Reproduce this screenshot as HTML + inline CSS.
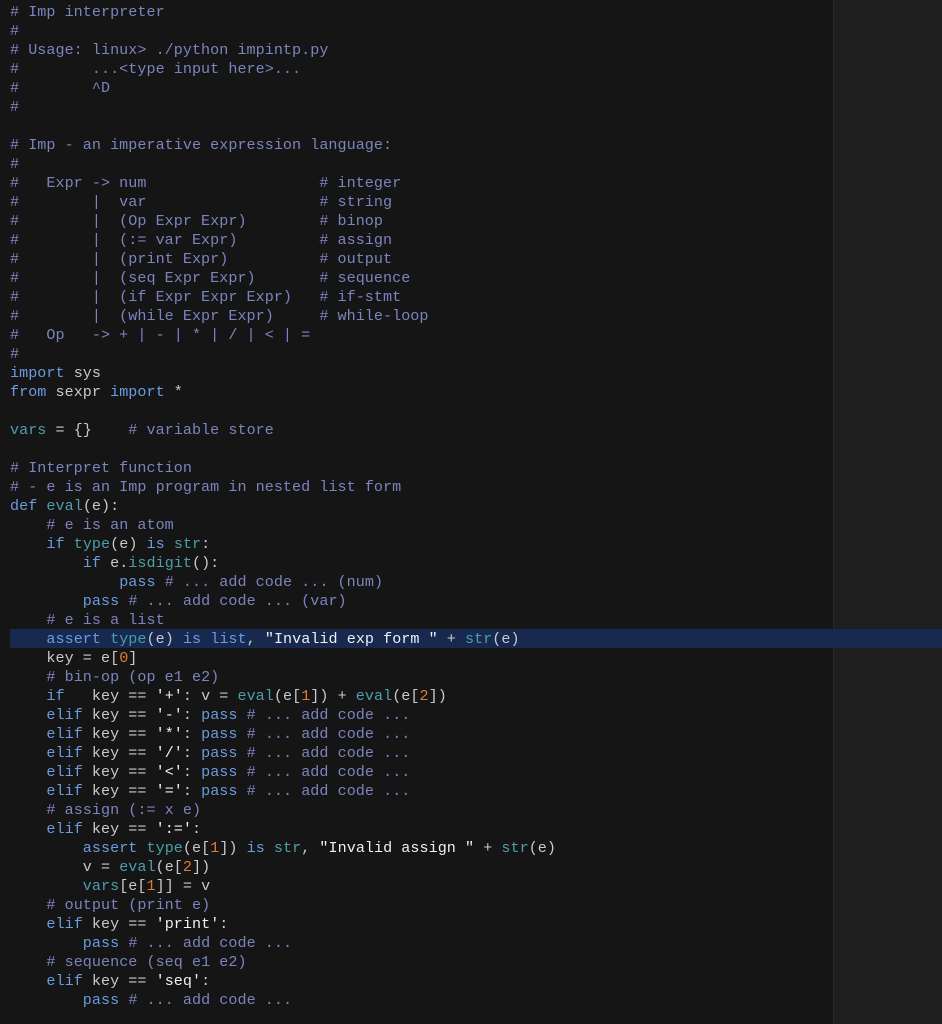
<!DOCTYPE html>
<html><head><meta charset="utf-8"><style>
html,body{margin:0;padding:0;background:#151515;width:942px;height:1024px;overflow:hidden}
.side{position:absolute;left:833px;top:0;width:109px;height:1024px;background:#1f1f1f;border-left:1px solid #2a2a2a}
.hl{position:absolute;left:10px;top:629px;width:932px;height:19px;background:#17294f}
pre{position:absolute;left:10px;top:3px;margin:0;font-family:"Liberation Mono",monospace;font-size:15.1px;letter-spacing:0.04px;line-height:19px;color:#c9c9c9}
.c{color:#7c84bf}.k{color:#6b9be0}.b{color:#4a9fab}.s{color:#f0f0f0}.n{color:#e07a30}
</style></head><body>
<div class="side"></div><div class="hl"></div>
<pre><span class="c"># Imp interpreter
#
# Usage: linux&gt; ./python impintp.py
#        ...&lt;type input here&gt;...
#        ^D
#</span>

<span class="c"># Imp - an imperative expression language:
#
#   Expr -&gt; num                   # integer
#        |  var                   # string
#        |  (Op Expr Expr)        # binop
#        |  (:= var Expr)         # assign
#        |  (print Expr)          # output
#        |  (seq Expr Expr)       # sequence
#        |  (if Expr Expr Expr)   # if-stmt
#        |  (while Expr Expr)     # while-loop
#   Op   -&gt; + | - | * | / | &lt; | =
#</span>
<span class="k">import</span> sys
<span class="k">from</span> sexpr <span class="k">import</span> *

<span class="b">vars</span> = {}    <span class="c"># variable store</span>

<span class="c"># Interpret function
# - e is an Imp program in nested list form</span>
<span class="k">def</span> <span class="b">eval</span>(e):
    <span class="c"># e is an atom</span>
    <span class="k">if</span> <span class="b">type</span>(e) <span class="k">is</span> <span class="b">str</span>:
        <span class="k">if</span> e.<span class="b">isdigit</span>():
            <span class="k">pass</span> <span class="c"># ... add code ... (num)</span>
        <span class="k">pass</span> <span class="c"># ... add code ... (var)</span>
    <span class="c"># e is a list</span>
    <span class="k">assert</span> <span class="b">type</span>(e) <span class="k">is</span> <span class="k">list</span>, <span class="s">"Invalid exp form "</span> + <span class="b">str</span>(e)
    key = e[<span class="n">0</span>]
    <span class="c"># bin-op (op e1 e2)</span>
    <span class="k">if</span>   key == <span class="s">'+'</span>: v = <span class="b">eval</span>(e[<span class="n">1</span>]) + <span class="b">eval</span>(e[<span class="n">2</span>])
    <span class="k">elif</span> key == <span class="s">'-'</span>: <span class="k">pass</span> <span class="c"># ... add code ...</span>
    <span class="k">elif</span> key == <span class="s">'*'</span>: <span class="k">pass</span> <span class="c"># ... add code ...</span>
    <span class="k">elif</span> key == <span class="s">'/'</span>: <span class="k">pass</span> <span class="c"># ... add code ...</span>
    <span class="k">elif</span> key == <span class="s">'&lt;'</span>: <span class="k">pass</span> <span class="c"># ... add code ...</span>
    <span class="k">elif</span> key == <span class="s">'='</span>: <span class="k">pass</span> <span class="c"># ... add code ...</span>
    <span class="c"># assign (:= x e)</span>
    <span class="k">elif</span> key == <span class="s">':='</span>:
        <span class="k">assert</span> <span class="b">type</span>(e[<span class="n">1</span>]) <span class="k">is</span> <span class="b">str</span>, <span class="s">"Invalid assign "</span> + <span class="b">str</span>(e)
        v = <span class="b">eval</span>(e[<span class="n">2</span>])
        <span class="b">vars</span>[e[<span class="n">1</span>]] = v
    <span class="c"># output (print e)</span>
    <span class="k">elif</span> key == <span class="s">'print'</span>:
        <span class="k">pass</span> <span class="c"># ... add code ...</span>
    <span class="c"># sequence (seq e1 e2)</span>
    <span class="k">elif</span> key == <span class="s">'seq'</span>:
        <span class="k">pass</span> <span class="c"># ... add code ...</span></pre>
</body></html>
